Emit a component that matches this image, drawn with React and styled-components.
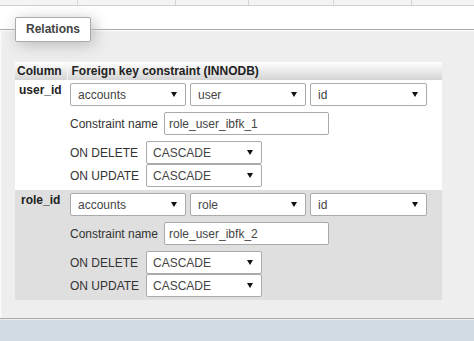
import React from "react";
import styled, { createGlobalStyle } from "styled-components";

const GlobalStyle = createGlobalStyle`
  html, body {
    margin: 0;
    padding: 0;
    background: #fff;
    font-family: "Liberation Sans", Arial, sans-serif;
    font-size: 12px;
    color: #333;
    overflow: hidden;
  }
`;

const Page = styled("div")`
  width: 474px;
  height: 341px;
  display: flex;
  flex-direction: column;
  overflow: hidden;
`;

const TabStrip = styled("div")`
  height: 5px;
  display: flex;
  background: #f4f4f4;
  border-bottom: 1px solid #d0d0d0;
`;

const Tab = styled("div")`
  width: ${(p) => p.w}px;
  flex-shrink: 0;
  border-right: 1px solid #d6d6d6;
`;

const Fieldset = styled("fieldset")`
  margin: 11px 0 0;
  padding: 0 15px 18px;
  border: none;
  border-top: 1px solid #aaa;
  border-bottom: 1px solid #aaa;
  background: #eee;
  box-shadow: 1px 1px 2px #fff inset;
  min-width: 0;
`;

const Legend = styled("legend")`
  font-weight: bold;
  color: #444;
  padding: 5px 10px;
  line-height: 13px;
  border-radius: 2px;
  border: 1px solid #aaa;
  background: #fff;
  box-shadow: 3px 3px 15px #bbb;
`;

const Table = styled("table")`
  margin-top: 20px;
  border-collapse: collapse;
  table-layout: fixed;
  width: 427px;
`;

const Th = styled("th")`
  text-align: left;
  font-weight: bold;
  color: #222;
  padding: 2px 2px 2px ${(p) => p.pl || 2}px;
  height: 14px;
  line-height: 14px;
  background: linear-gradient(#fff, #d4d4d4);
  border-right: ${(p) => (p.sep ? "1px solid #f4f4f4" : "none")};
  white-space: nowrap;
`;

const Row = styled("tr")`
  background: ${(p) => (p.even ? "#dfdfdf" : "#fff")};
`;

const NameCell = styled("td")`
  vertical-align: top;
  font-weight: bold;
  color: #222;
  padding: 3px 2px 0 ${(p) => p.pl || 4}px;
  line-height: 14px;
`;

const FieldCell = styled("td")`
  padding: 3px;
  vertical-align: top;
`;

const SelectLine = styled("div")`
  display: flex;
  gap: 4px;
`;

const Line = styled("div")`
  display: flex;
  align-items: center;
  margin-top: ${(p) => p.mt || 0}px;
`;

const Label = styled("span")`
  width: ${(p) => p.w}px;
  flex-shrink: 0;
  color: #333;
`;

const SelectBox = styled("div")`
  box-sizing: border-box;
  width: ${(p) => p.w || 116}px;
  height: 23px;
  display: flex;
  align-items: center;
  justify-content: space-between;
  padding: 0 8px 0 ${(p) => p.pl || 7}px;
  background: #fff;
  border: 1px solid #aaa;
  border-radius: 2px;
  color: #444;
  flex-shrink: 0;
`;

const Arrow = styled("span")`
  width: 0;
  height: 0;
  border-left: 3px solid transparent;
  border-right: 3px solid transparent;
  border-top: 5px solid #111;
`;

const TextInput = styled("div")`
  box-sizing: border-box;
  width: 165px;
  height: 23px;
  display: flex;
  align-items: center;
  padding-left: 4px;
  background: #fff;
  border: 1px solid #aaa;
  border-radius: 2px;
  color: #444;
`;

const Footer = styled("div")`
  flex: 1;
  background: #d3dce3;
  border-top: 1px solid #e9edf0;
`;

const Select = ({ value, w, pl }) => (
  <SelectBox w={w} pl={pl}>
    <span>{value}</span>
    <Arrow />
  </SelectBox>
);

const relations = [
  { column: "user_id", table: "accounts", field: "user", key: "id", name: "role_user_ibfk_1" },
  { column: "role_id", table: "accounts", field: "role", key: "id", name: "role_user_ibfk_2" },
];

const RelationRow = ({ rel, even }) => (
  <Row even={even}>
    <NameCell pl={even ? 6 : 4}>{rel.column}</NameCell>
    <FieldCell>
      <SelectLine>
        <Select value={rel.table} w={116} />
        <Select value={rel.field} w={116} />
        <Select value={rel.key} w={117} />
      </SelectLine>
      <Line mt={6}>
        <Label w={94}>Constraint name</Label>
        <TextInput>{rel.name}</TextInput>
      </Line>
      <Line mt={6}>
        <Label w={76}>ON DELETE</Label>
        <Select value="CASCADE" w={116} pl={6} />
      </Line>
      <Line>
        <Label w={76}>ON UPDATE</Label>
        <Select value="CASCADE" w={116} pl={6} />
      </Line>
    </FieldCell>
  </Row>
);

export default function App() {
  return (
    <Page>
      <GlobalStyle />
      <TabStrip>
        <Tab w={77} />
        <Tab w={97} />
        <Tab w={72} />
        <Tab w={84} />
        <Tab w={77} />
      </TabStrip>
      <Fieldset>
        <Legend>Relations</Legend>
        <Table>
          <colgroup>
            <col style={{ width: 52 }} />
            <col />
          </colgroup>
          <thead>
            <tr>
              <Th sep>Column</Th>
              <Th pl={4}>Foreign key constraint (INNODB)</Th>
            </tr>
          </thead>
          <tbody>
            {relations.map((rel, i) => (
              <RelationRow key={rel.column} rel={rel} even={i % 2 === 1} />
            ))}
          </tbody>
        </Table>
      </Fieldset>
      <Footer />
    </Page>
  );
}
